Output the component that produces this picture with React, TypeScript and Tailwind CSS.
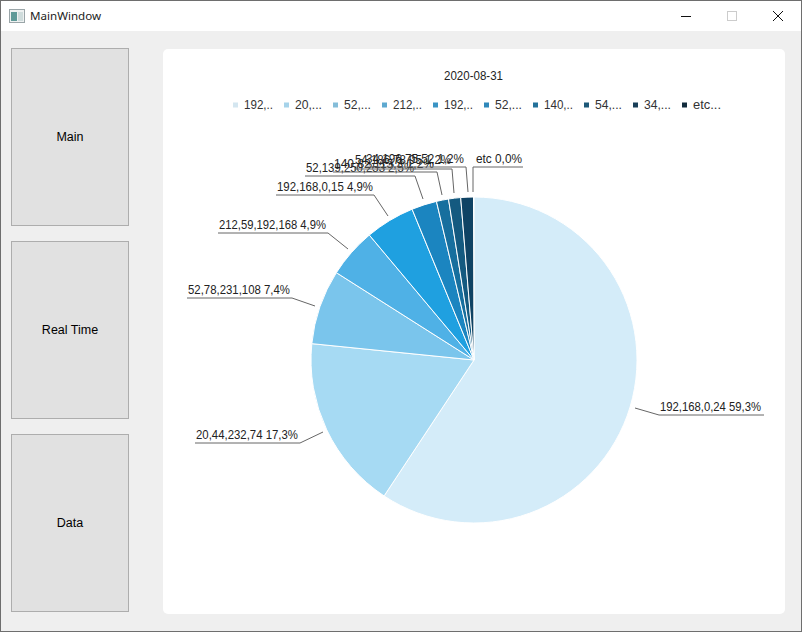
const chartFont = '"Liberation Sans", "Noto Sans CJK KR", sans-serif'

const CX = 474
const CY = 360
const R = 163

const slices = [
  { value: 59.3, color: '#d4ecf9' },
  { value: 17.3, color: '#a6daf3' },
  { value: 7.4, color: '#7ac5ec' },
  { value: 4.9, color: '#4fb1e6' },
  { value: 4.9, color: '#1fa0e0' },
  { value: 2.5, color: '#1b85c0' },
  { value: 1.2, color: '#176f9e' },
  { value: 1.2, color: '#145a80' },
  { value: 1.25, color: '#0f4364' },
]

const legend = [
  { label: '192,..', x: 233, width: 29, color: '#d4e6f0' },
  { label: '20,...', x: 284, width: 27, color: '#a6d3ea' },
  { label: '52,...', x: 333, width: 27, color: '#84bdd9' },
  { label: '212,..', x: 382, width: 29, color: '#5ea9d0' },
  { label: '192,..', x: 433, width: 29, color: '#3a94c4' },
  { label: '52,...', x: 484, width: 27, color: '#2f88ba' },
  { label: '140,..', x: 533, width: 29, color: '#23719a' },
  { label: '54,...', x: 584, width: 27, color: '#1d5878' },
  { label: '34,...', x: 633, width: 27, color: '#193f58' },
  { label: 'etc...', x: 682, width: 28, color: '#122b3c' },
]

const callouts = [
  { text: '192,168,0,24 59,3%', x: 660, y: 411, width: 101, line: '635,408 659,415 764,415' },
  { text: '20,44,232,74 17,3%', x: 196, y: 439, width: 102, line: '323,432 300,443 195,443' },
  { text: '52,78,231,108 7,4%', x: 188, y: 294, width: 102, line: '315,306 292,298 187,298' },
  { text: '212,59,192,168 4,9%', x: 219, y: 229, width: 107, line: '348,249 328,233 218,233' },
  { text: '192,168,0,15 4,9%', x: 277, y: 191, width: 96, line: '388,216 374,195 276,195' },
  { text: '52,139,250,253 2,5%', x: 306, y: 172, width: 108, line: '423,199 415,176 305,176' },
  { text: '140,82,113,3 1,2%', x: 334, y: 168, width: 100, line: '442,195 437,172 333,172' },
  { text: '54,186,78,95 1,2%', x: 355, y: 164, width: 96, line: '454,193 452,169 354,169' },
  { text: '34,196,75,52 1,2%', x: 366, y: 163, width: 98, line: '468,192 466,167 365,167' },
  { text: 'etc 0,0%', x: 476, y: 163, width: 46, line: '473,192 473,167 523,167' },
]

function slicePath(start: number, end: number) {
  const a0 = (start / 100) * Math.PI * 2
  const a1 = (end / 100) * Math.PI * 2
  const x0 = CX + R * Math.sin(a0)
  const y0 = CY - R * Math.cos(a0)
  const x1 = CX + R * Math.sin(a1)
  const y1 = CY - R * Math.cos(a1)
  const large = end - start > 50 ? 1 : 0
  return `M${CX} ${CY} L${x0} ${y0} A${R} ${R} 0 ${large} 1 ${x1} ${y1} Z`
}

function PieChart() {
  let total = 0
  return (
    <svg viewBox="163 49 622 565" className="block h-full w-full" style={{ fontFamily: chartFont }}>
      <text x="444" y="79.5" fontSize="13" fill="#222" textLength="59" lengthAdjust="spacingAndGlyphs">2020-08-31</text>
      {legend.map((item) => (
        <g key={item.x}>
          <rect x={item.x} y="102.5" width="5" height="5" fill={item.color} />
          <text x={item.x + 11} y="109" fontSize="13" fill="#333" textLength={item.width} lengthAdjust="spacingAndGlyphs">{item.label}</text>
        </g>
      ))}
      {slices.map((slice) => {
        const start = total
        total += slice.value
        return <path key={start} d={slicePath(start, total)} fill={slice.color} stroke="#fff" strokeWidth="1" />
      })}
      {callouts.map((c) => (
        <g key={c.text}>
          <polyline points={c.line} fill="none" stroke="#666" strokeWidth="1" />
          <text x={c.x} y={c.y} fontSize="13" fill="#222" textLength={c.width} lengthAdjust="spacingAndGlyphs">{c.text}</text>
        </g>
      ))}
    </svg>
  )
}

function NavButton({ label }: { label: string }) {
  return (
    <button
      type="button"
      className="h-[178px] w-[118px] border border-[#adadad] bg-[#e1e1e1] text-[12.5px] text-black"
      style={{ fontFamily: chartFont }}
    >
      {label}
    </button>
  )
}

export default function App() {
  return (
    <div className="flex h-[632px] w-[802px] flex-col overflow-hidden border border-[#6e6e6e] bg-[#efefef]">
      <div className="flex h-[30px] shrink-0 items-center bg-white pl-[8px]">
        <svg width="16" height="14" viewBox="0 0 16 14">
          <rect x="0.5" y="0.5" width="15" height="13" fill="#eef1f1" stroke="#9aa5a8" />
          <rect x="2" y="3" width="6" height="9" fill="#5f9a98" />
          <rect x="9" y="3" width="5" height="9" fill="#cfdcdc" />
        </svg>
        <span className="ml-[5px] text-[11.6px] text-[#222]" style={{ fontFamily: '"Noto Sans", sans-serif' }}>
          MainWindow
        </span>
        <div className="ml-auto flex items-center">
          <svg width="12" height="12" viewBox="0 0 12 12" className="mr-[34px]">
            <path d="M1 6.5H11" stroke="#111" strokeWidth="1" />
          </svg>
          <svg width="12" height="12" viewBox="0 0 12 12" className="mr-[34px]">
            <rect x="1.5" y="1.5" width="9" height="9" fill="none" stroke="#ccc" />
          </svg>
          <svg width="12" height="12" viewBox="0 0 12 12" className="mr-[17px]">
            <path d="M1 1L11 11M11 1L1 11" stroke="#111" strokeWidth="1" />
          </svg>
        </div>
      </div>
      <div className="flex min-h-0 flex-1 pl-[10px] pt-[17px]">
        <div className="flex w-[118px] flex-col gap-[15px]">
          <NavButton label="Main" />
          <NavButton label="Real Time" />
          <NavButton label="Data" />
        </div>
        <div className="ml-[34px] mt-[1px] h-[565px] w-[622px] overflow-hidden rounded-[5px] bg-white">
          <PieChart />
        </div>
      </div>
    </div>
  )
}
